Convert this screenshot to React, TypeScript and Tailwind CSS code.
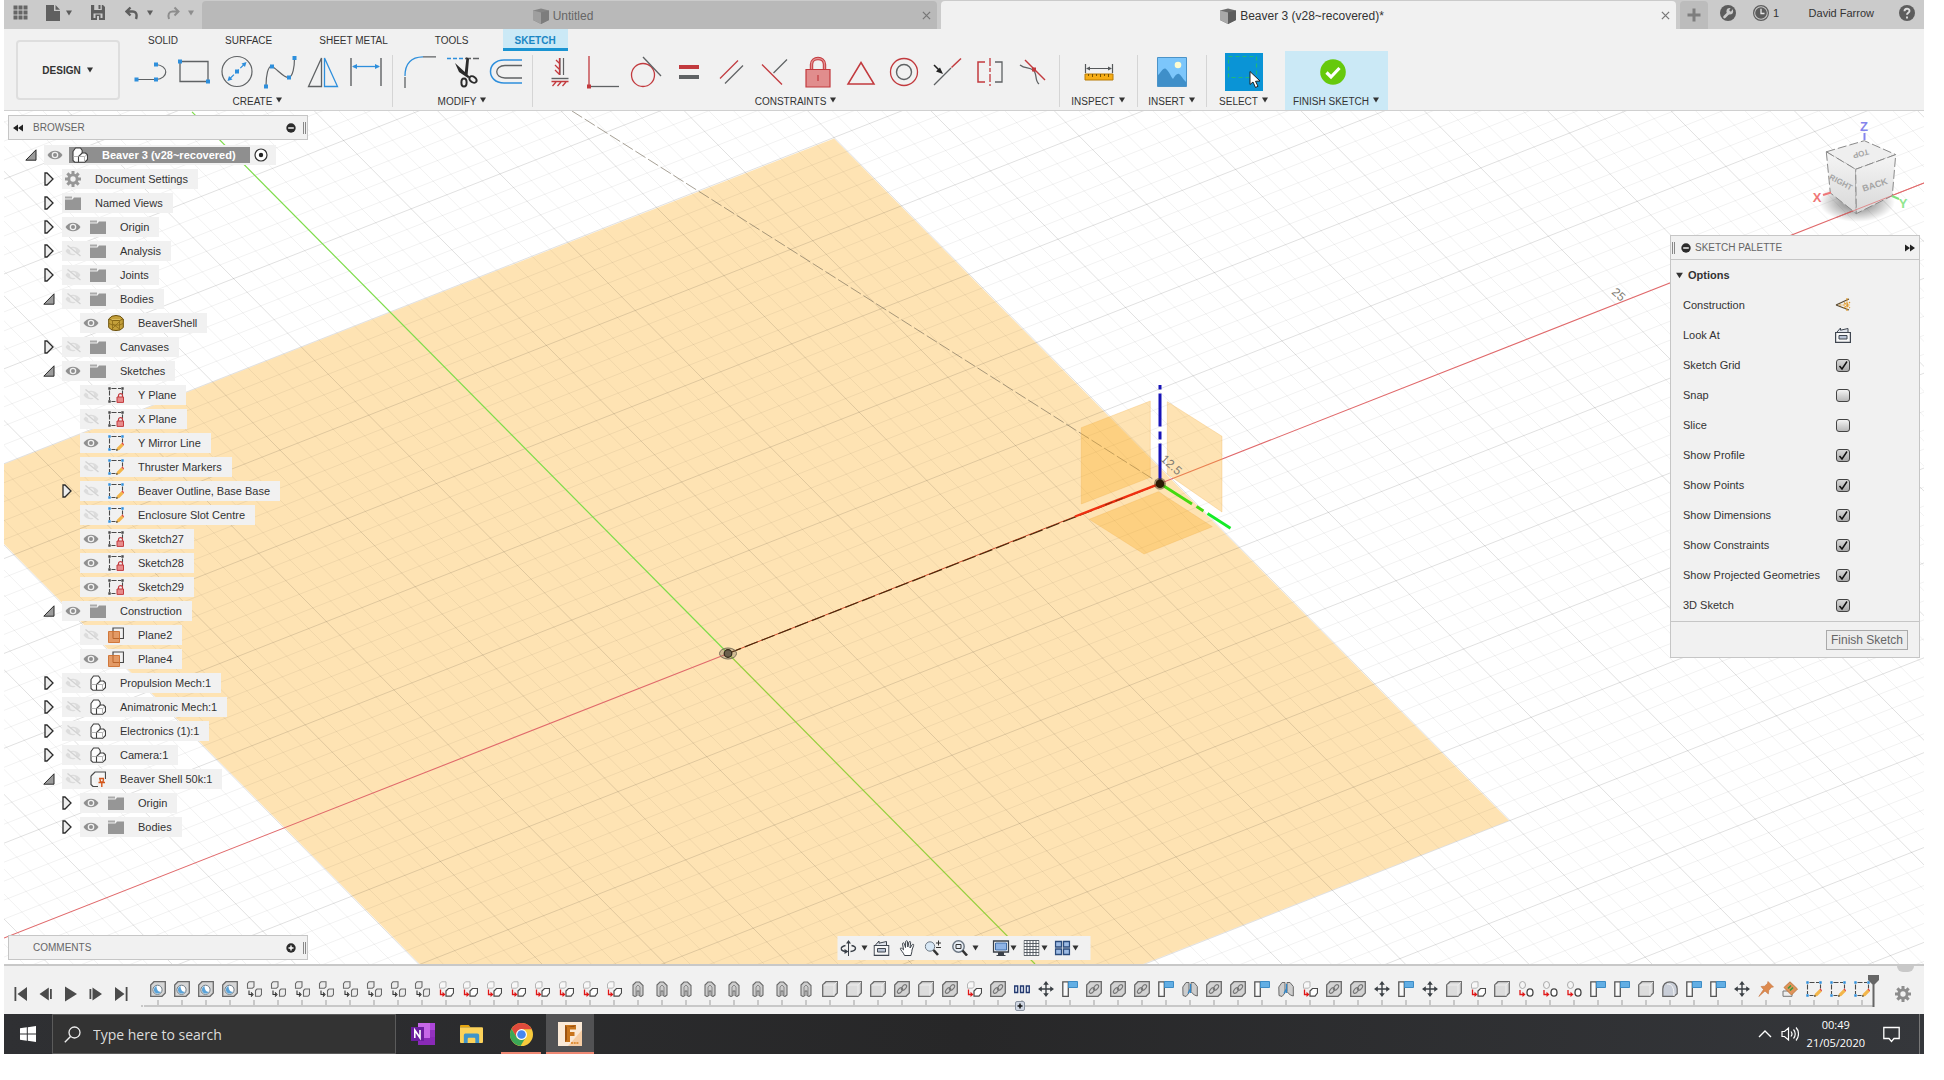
import React from "react";

/* ---------- small shared pieces ---------- */

function Caret({ className = "" }: { className?: string }) {
  return (
    <svg viewBox="0 0 8 6" className={`h-[6px] w-[8px] shrink-0 ${className}`} aria-hidden="true">
      <path d="M1 0.5h6L4 5.5z" fill="currentColor" />
    </svg>
  );
}

function CubeMark({ dark }: { dark?: boolean }) {
  return (
    <svg viewBox="0 0 16 16" className="h-4 w-4 shrink-0" aria-hidden="true">
      <path d="M0 2.5 8 .5l8 2v9.5l-8 4-8-4z" fill={dark ? "#6b6b6b" : "#858585"} />
      <path d="M0 2.5 8 4.5V16l-8-4z" fill={dark ? "#a9a9a9" : "#9f9f9f"} />
      <path d="M8 4.5l8-2v9.5l-8 4z" fill={dark ? "#5d5d5d" : "#7d7d7d"} />
    </svg>
  );
}

function Grip() {
  return (
    <span className="flex h-3 w-[3px] justify-between" aria-hidden="true">
      <span className="w-px bg-[#888]" />
      <span className="w-px bg-[#888]" />
    </span>
  );
}

function RoundSign({ plus }: { plus?: boolean }) {
  return (
    <svg viewBox="0 0 10 10" className="h-[10px] w-[10px]" aria-hidden="true">
      <circle cx="5" cy="5" r="4.7" fill="#2b2b2b" />
      <path d={plus ? "M2.5 5h5M5 2.5v5" : "M2.2 5h5.6"} stroke="#fff" strokeWidth="1.4" />
    </svg>
  );
}

/* ---------- top bar ---------- */

function TopBar() {
  return (
    <header className="flex h-[29px] shrink-0 items-stretch bg-[#cbcbcb] text-[#5c5c5c]">
      <div className="flex w-[198px] shrink-0 items-center pb-1 pl-2">
        <button aria-label="Data panel" className="ml-px">
          <svg viewBox="0 0 15 15" className="h-[15px] w-[15px]">
            {[0, 5, 10].map((y) =>
              [0, 5, 10].map((x) => <rect key={`${x}-${y}`} x={x + 0.5} y={y + 0.5} width="4" height="4" fill="#666" />)
            )}
          </svg>
        </button>
        <button aria-label="File" className="ml-[18px] flex items-center gap-[5px]">
          <svg viewBox="0 0 14 16" className="h-4 w-[14px]">
            <path d="M0 0h8v6h6v10H0z" fill="#606060" />
            <path d="M9.5 0 14 4.7H9.5z" fill="#606060" />
          </svg>
          <Caret />
        </button>
        <button aria-label="Save" className="ml-[18px]">
          <svg viewBox="0 0 14 15" className="h-[15px] w-[14px]">
            <path d="M0 0h12l2 2v13H0z" fill="#5e5e5e" />
            <path d="M3.2 0h7.6v5H3.2zM2.5 8.5h9V13h-9z" fill="#cbcbcb" />
            <path d="M7.5 0h2v4h-2zM4.5 9.5h5V15h-5z" fill="#5e5e5e" />
            <path d="M6 11h2v4H6z" fill="#cbcbcb" />
          </svg>
        </button>
        <button aria-label="Undo" className="ml-5 flex items-center gap-[7px]">
          <svg viewBox="0 0 14 14" className="h-[14px] w-[14px]">
            <path d="M5.5 1.5 1.5 5.5l4 4M2 5.5h5.5c3.5 0 5 3 3.5 7.5" fill="none" stroke="#5e5e5e" strokeWidth="2.4" />
          </svg>
          <Caret />
        </button>
        <button aria-label="Redo" className="ml-3 flex items-center gap-[7px] text-[#8d8d8d]">
          <svg viewBox="0 0 14 14" className="h-[14px] w-[14px]">
            <path d="M8.5 1.5l4 4-4 4M12 5.5H6.5C3 5.5 1.5 8.5 3 13" fill="none" stroke="#8d8d8d" strokeWidth="2" />
          </svg>
          <Caret />
        </button>
      </div>

      <div className="flex min-w-0 flex-1 gap-1 pt-px text-[12px]" role="tablist">
        <div className="flex min-w-0 flex-1 items-center rounded-t bg-[#b9b9b9] pr-[5px]">
          <button role="tab" aria-selected="false" className="flex h-full flex-1 items-center justify-center gap-1 pl-1 pt-px text-[#666]">
            <CubeMark />
            Untitled
          </button>
          <button aria-label="Close Untitled" className="w-3">
            <svg viewBox="0 0 10 10" className="mx-auto h-[9px] w-[9px]">
              <path d="M1 1l8 8M9 1 1 9" stroke="#777" strokeWidth="1.4" />
            </svg>
          </button>
        </div>
        <div className="flex min-w-0 flex-1 items-center rounded-t bg-[#f1f1f1] pr-[5px]">
          <button role="tab" aria-selected="true" className="flex h-full flex-1 items-center justify-center gap-1 pl-1 pt-px text-[#333]">
            <CubeMark dark />
            Beaver 3 (v28~recovered)*
          </button>
          <button aria-label="Close Beaver 3" className="w-3">
            <svg viewBox="0 0 10 10" className="mx-auto h-[9px] w-[9px]">
              <path d="M1 1l8 8M9 1 1 9" stroke="#777" strokeWidth="1.4" />
            </svg>
          </button>
        </div>
      </div>

      <div className="flex w-[248px] shrink-0 pl-1 pt-px">
        <button aria-label="New tab" className="flex w-7 items-center justify-center rounded-t bg-[#bcbcbc]">
          <svg viewBox="0 0 14 14" className="h-[14px] w-[14px]">
            <path d="M7 .5v13M.5 7h13" stroke="#7e7e7e" strokeWidth="3" />
          </svg>
        </button>
        <div className="flex flex-1 items-center pb-1 pl-3 pr-[9px] text-[11px] text-[#333]">
          <button aria-label="Job status">
            <svg viewBox="0 0 16 16" className="h-4 w-4">
              <circle cx="8" cy="8" r="8" fill="#5d5d5d" />
              <path d="M4.500 12 8.500 8" stroke="#cbcbcb" strokeWidth="2.600" strokeLinecap="round" />
              <circle cx="9.800" cy="6.200" r="3.300" fill="#cbcbcb" />
              <path d="M12.500 2.500 10 6" stroke="#5d5d5d" strokeWidth="2.200" />
            </svg>
          </button>
          <button aria-label="Notifications, 1" className="ml-[17px] flex items-center gap-1">
            <svg viewBox="0 0 16 16" className="h-4 w-4">
              <circle cx="8" cy="8" r="7.4" fill="none" stroke="#5d5d5d" strokeWidth="1.2" />
              <circle cx="8" cy="8" r="5.8" fill="#5d5d5d" />
              <path d="M8 3.8v4.700h3.500" stroke="#e8e8e8" strokeWidth="1.3" fill="none" />
            </svg>
            1
          </button>
          <button className="ml-auto">David Farrow</button>
          <button aria-label="Help" className="ml-[25px]">
            <svg viewBox="0 0 16 16" className="h-4 w-4">
              <circle cx="8" cy="8" r="8" fill="#5d5d5d" />
              <path d="M5.5 6.2C5.5 3 10.500 3 10.500 6c0 1.800-2.500 1.800-2.500 3.800M8 11.500v2" stroke="#ddd" strokeWidth="1.9" fill="none" />
            </svg>
          </button>
        </div>
      </div>
    </header>
  );
}

/* ---------- ribbon ---------- */

const GREY = "#5f6264";
const BLUE = "#2e8fdc";
const RED = "#c23a3e";

const ribbonArt: Record<string, React.ReactNode> = {
  line: (
    <>
      <path d="M1 23.5h20M21 8.5c13 1 13 14 0 15" fill="none" stroke={GREY} strokeWidth="1.2" />
      <path d="M-.5 21.5h4v4h-4zM19 21.5h4v4h-4zM19 6.5h4v4h-4z" fill={BLUE} />
    </>
  ),
  rect: (
    <>
      <path d="M2 5.5h28v20H2z" fill="none" stroke={GREY} strokeWidth="1.3" />
      <path d="M0 3.5h4v4H0zM28 23.5h4v4h-4z" fill={BLUE} />
    </>
  ),
  circle: (
    <>
      <circle cx="16" cy="15.5" r="15" fill="none" stroke={GREY} strokeWidth="1.2" />
      <path d="M8 23.5 24 7.5" stroke={BLUE} strokeWidth="1.2" strokeDasharray="7 2 5 2 7" />
      <path d="M14 13.5h4v4h-4zM25.5 6l-1.5 5-3.5-3.5zM6.5 25l1.5-5 3.5 3.5z" fill={BLUE} />
    </>
  ),
  spline: (
    <>
      <path d="M2 30C2 20 4 9 8 10.5S20 22 24.500 21.500 30.500 10 30.500 2" fill="none" stroke={GREY} strokeWidth="1.2" />
      <path d="M0 28.5h4v4H0zM6 8.5h4v4H6zM23 19.5h4v4h-4zM28.500 0h4v4h-4z" fill={BLUE} />
    </>
  ),
  mirror: (
    <>
      <path d="M14.5 2v28.5H1.5z" fill="none" stroke={GREY} strokeWidth="1.3" />
      <path d="M17.5 2v28.5h13z" fill="none" stroke={BLUE} strokeWidth="1.3" />
    </>
  ),
  dimension: (
    <>
      <path d="M1 2v28M31 2v28" stroke={GREY} strokeWidth="1.4" />
      <path d="M3 10.5h26" stroke={BLUE} strokeWidth="1.3" />
      <path d="M2 10.5l5-2.5v5zM30 10.5l-5-2.5v5z" fill={BLUE} />
    </>
  ),
  fillet: (
    <>
      <path d="M1 20C1 7 8 1 19 .8" fill="none" stroke={BLUE} strokeWidth="1.3" />
      <path d="M19 .8h13M1 21v11" stroke={GREY} strokeWidth="1.3" />
    </>
  ),
  trim: (
    <>
      <path d="M0 2.5h17" stroke={BLUE} strokeWidth="1.4" strokeDasharray="4 2" />
      <path d="M18 2.5h14" stroke={GREY} strokeWidth="1.3" strokeDasharray="6 2" />
      <path d="M19.5 1 22 3l-1.500 17-3-1zM8 7l12 11 3 3-2 1-9-6z" fill="#2b2b2b" />
      <ellipse cx="17" cy="26.5" rx="2.6" ry="4" fill="none" stroke="#2b2b2b" strokeWidth="2" />
      <ellipse cx="26" cy="23.5" rx="4" ry="2.8" transform="rotate(35 26 23.5)" fill="none" stroke="#2b2b2b" strokeWidth="2" />
    </>
  ),
  offset: (
    <>
      <path d="M32 4H14C-4 4-4 27 14 27h18" fill="none" stroke={BLUE} strokeWidth="1.5" />
      <path d="M32 9.5H15C4 9.500 4 22 15 22h17" fill="none" stroke={GREY} strokeWidth="1.3" />
    </>
  ),
  horizontal: (
    <>
      <path d="M16 2v17M19.5 2v17" stroke={GREY} strokeWidth="1.2" />
      <path d="M7.5 22.5h17" stroke={GREY} strokeWidth="1.4" />
      <path d="M15.5 2v17M12 4l3.500 3.500M11 9l4.500 4.500M11 14l4.500 4.500M7.500 25.500h17M12 26l-3.500 4M17 26l-3.500 4M22 26l-3.500 4" fill="none" stroke={RED} strokeWidth="1.3" />
    </>
  ),
  coincident: (
    <>
      <path d="M2 30.5h30" stroke={GREY} strokeWidth="1.3" />
      <path d="M2 0v30" stroke={RED} strokeWidth="1.3" />
      <path d="M0 28.5h4v4H0z" fill={RED} />
    </>
  ),
  tangent: (
    <>
      <circle cx="13" cy="19" r="11.5" fill="none" stroke={RED} strokeWidth="1.3" />
      <path d="M13 1 31 20" stroke={GREY} strokeWidth="1.3" />
    </>
  ),
  equal: (
    <>
      <path d="M6 9h20v4H6z" fill={RED} />
      <path d="M6 19h20v4H6z" fill={GREY} />
    </>
  ),
  parallel: (
    <>
      <path d="M4 22.5 22 4.5" stroke={RED} strokeWidth="1.3" />
      <path d="M9 27.5 27 9.5" stroke={GREY} strokeWidth="1.3" />
    </>
  ),
  perpendicular: (
    <>
      <path d="M3 8.5 23 28.5" stroke={RED} strokeWidth="1.3" />
      <path d="M28 3.5 14.500 17" stroke={GREY} strokeWidth="1.3" />
    </>
  ),
  lock: (
    <>
      <path d="M9.5 13V8.5c0-8 13-8 13 0V13" fill="none" stroke={RED} strokeWidth="3.4" />
      <path d="M9.5 13V8.5c0-8 13-8 13 0V13" fill="none" stroke="#e58f8f" strokeWidth="1.4" />
      <path d="M4 13.5h24V31H4z" fill="#e18d8d" stroke={RED} strokeWidth="1.2" />
      <path d="M16 19v6" stroke={RED} strokeWidth="1.2" />
    </>
  ),
  triangle: <path d="M16 6.5 29 28H3z" fill="none" stroke={RED} strokeWidth="1.5" />,
  concentric: (
    <>
      <circle cx="16" cy="16" r="13.5" fill="none" stroke={RED} strokeWidth="1.3" />
      <circle cx="16" cy="16" r="7.5" fill="none" stroke={GREY} strokeWidth="1.4" />
    </>
  ),
  collinear: (
    <>
      <path d="M3 29 20 12" stroke={GREY} strokeWidth="1.3" />
      <path d="M20.5 11.5l9.500-9" stroke={RED} strokeWidth="1.5" />
      <path d="M3 9l6 6" stroke="#222" strokeWidth="1.6" />
      <path d="M12 18l-7-2.500 4-4z" fill="#222" />
    </>
  ),
  symmetry: (
    <>
      <path d="M11 6H4v20h7" fill="none" stroke={RED} strokeWidth="1.5" />
      <path d="M21 6h7v20h-7" fill="none" stroke={GREY} strokeWidth="1.3" />
      <path d="M16 2v28" stroke={RED} strokeWidth="1.3" strokeDasharray="8 2 4 2" />
    </>
  ),
  curvature: (
    <>
      <path d="M3 9c5 4 9 2 13 5 5 4 1 10 6 14" fill="none" stroke={GREY} strokeWidth="1.3" />
      <path d="M8 4 28 24" stroke={RED} strokeWidth="1.4" />
      <path d="M15 11.5h4v4h-4z" fill={RED} />
    </>
  ),
  inspect: (
    <>
      <path d="M2.5 8v9M29.5 8v9M4 12.5h24" stroke="#55585a" strokeWidth="1.2" />
      <path d="M3 12.5l4-2v4zM29 12.5l-4-2v4z" fill="#55585a" />
      <path d="M2 18h28v6H2z" fill="#f6ad16" stroke="#b87a05" />
      <path d="M5.5 18v2M9.5 18v3M13.5 18v2M17.5 18v3M21.5 18v2M25.5 18v3" stroke="#7a5200" />
    </>
  ),
  insert: (
    <>
      <path d="M1.5 1.5h29v29h-29z" fill="#7cc6fb" stroke="#4b93c8" />
      <circle cx="22" cy="9" r="3.3" fill="#fdfcd0" />
      <path d="M2 19c3-2 5-8 8-6s5 8 7 10c2-3 4-6 6-5s4 5 7 8v4H2z" fill="#3f8fc9" />
    </>
  ),
};

function Tool({ name, label }: { name: string; label: string }) {
  return (
    <button aria-label={label} className="flex w-[43px] justify-center">
      <svg viewBox="0 0 32 32" className="h-8 w-8 overflow-visible">
        {ribbonArt[name]}
      </svg>
    </button>
  );
}

function MenuLabel({ children }: { children: string }) {
  return (
    <button className="mt-[7px] flex items-center gap-[3px] leading-[14px]">
      {children}
      <Caret className="-mt-1" />
    </button>
  );
}

function Group({ label, tools }: { label: string; tools: [string, string][] }) {
  return (
    <section className="flex flex-col items-center">
      <div className="flex pt-[27px]">
        {tools.map(([name, text]) => (
          <Tool key={name} name={name} label={text} />
        ))}
      </div>
      <MenuLabel>{label}</MenuLabel>
    </section>
  );
}

function Separator() {
  return <div className="mt-[26px] h-[52px] w-px shrink-0 bg-[#d5d5d5]" />;
}

function Ribbon() {
  const tabs = ["SOLID", "SURFACE", "SHEET METAL", "TOOLS"];
  return (
    <div className="relative flex h-[82px] shrink-0 border-b border-[#d0d0d0] bg-[#f1f1f1] text-[10px] text-[#333]">
      <button className="ml-3 mt-[11px] flex h-[60px] w-[104px] shrink-0 items-center justify-center gap-[5px] rounded border-2 border-[#dedede] bg-[#f2f2f2] font-bold">
        DESIGN
        <Caret />
      </button>
      <nav className="absolute left-[131px] top-0 z-10 flex h-[22px] gap-[21px]">
        {tabs.map((t) => (
          <button key={t} className="px-[13px]">
            {t}
          </button>
        ))}
        <button className="border-b-[3px] border-[#1a94d2] bg-[#cbe9f6] px-3 pt-[3px] font-bold text-[#1a86c4]">SKETCH</button>
      </nav>
      <div className="ml-[9px] flex gap-[5px]">
        <Group
          label="CREATE"
          tools={[
            ["line", "Line"],
            ["rect", "Rectangle"],
            ["circle", "Circle"],
            ["spline", "Spline"],
            ["mirror", "Mirror"],
            ["dimension", "Dimension"],
          ]}
        />
        <Separator />
        <Group
          label="MODIFY"
          tools={[
            ["fillet", "Fillet"],
            ["trim", "Trim"],
            ["offset", "Offset"],
          ]}
        />
        <Separator />
        <Group
          label="CONSTRAINTS"
          tools={[
            ["horizontal", "Horizontal/Vertical"],
            ["coincident", "Coincident"],
            ["tangent", "Tangent"],
            ["equal", "Equal"],
            ["parallel", "Parallel"],
            ["perpendicular", "Perpendicular"],
            ["lock", "Fix"],
            ["triangle", "Midpoint"],
            ["concentric", "Concentric"],
            ["collinear", "Collinear"],
            ["symmetry", "Symmetry"],
            ["curvature", "Curvature"],
          ]}
        />
        <Separator />
      </div>
      <div className="flex w-[77px] justify-center">
        <Group label="INSPECT" tools={[["inspect", "Measure"]]} />
      </div>
      <Separator />
      <div className="flex w-[68px] justify-center">
        <Group label="INSERT" tools={[["insert", "Insert image"]]} />
      </div>
      <Separator />
      <div className="flex w-[78px] flex-col items-center pr-1 pt-6">
        <button aria-label="Select">
          <svg viewBox="0 0 38 38" className="h-[38px] w-[38px] overflow-visible">
            <path d="M0 0h38v38H0z" fill="#0a94d6" />
            <path d="M3.5 3.5h28v21h-28z" fill="none" stroke="#1eb87a" strokeWidth="1.2" strokeDasharray="4 3" />
            <path d="M25 18.5v13l3-2.500 2.500 5.500 2.500-1.200-2.500-5 4.500-.3z" fill="#fff" stroke="#222" />
          </svg>
        </button>
        <div className="-mt-[3px]">
          <MenuLabel>SELECT</MenuLabel>
        </div>
      </div>
      <div className="mt-[22px] flex w-[103px] flex-col items-center bg-[#cbe9f6] pt-2">
        <button aria-label="Finish sketch" className="mr-[7px]">
          <svg viewBox="0 0 26 26" className="h-[26px] w-[26px]">
            <circle cx="13" cy="13" r="12.8" fill="#66c90c" />
            <path d="M6.5 13.5l4.500 4.500 8.500-9" fill="none" stroke="#fff" strokeWidth="3.2" />
          </svg>
        </button>
        <div className="mt-[3px]">
          <MenuLabel>FINISH SKETCH</MenuLabel>
        </div>
      </div>
    </div>
  );
}

/* ---------- model canvas ---------- */

const CX = 728;
const CY = 653.5;
const UX = 88.8;
const UY = -34.9;
const VX = 67.6;
const VY = 68.3;

function gridPath(major: boolean) {
  let d = "";
  for (let i = -110; i <= 110; i++) {
    if ((i % 5 === 0) !== major || i === 0) continue;
    const s = i / 5;
    d += `M${CX + s * UX - 24 * VX} ${CY + s * UY - 24 * VY}L${CX + s * UX + 24 * VX} ${CY + s * UY + 24 * VY}`;
    d += `M${CX + s * VX - 24 * UX} ${CY + s * VY - 24 * UY}L${CX + s * VX + 24 * UX} ${CY + s * VY + 24 * UY}`;
  }
  return d;
}

function ModelCanvas() {
  const plane = "#fdac20";
  return (
    <svg viewBox="4 111 1920 853" preserveAspectRatio="xMidYMid slice" className="absolute inset-0 h-full w-full" aria-hidden="true">
      <defs>
        <radialGradient id="cubeShadow">
          <stop offset="0.4" stopColor="#000" stopOpacity="0.35" />
          <stop offset="1" stopColor="#000" stopOpacity="0" />
        </radialGradient>
        <linearGradient id="cubeFace" x1="0" y1="0" x2="0" y2="1">
          <stop offset="0" stopColor="#f5f5f5" />
          <stop offset="1" stopColor="#d8d8d8" />
        </linearGradient>
      </defs>
      <path d="M4 111h1920v853H4z" fill="#fff" />
      <path d="M834 138.500 1509 820.500 622 1168.500-53 486.500z" fill={plane} fillOpacity="0.34" />
      <path d={gridPath(false)} stroke="#000" strokeOpacity="0.055" fill="none" />
      <path d={gridPath(true)} stroke="#000" strokeOpacity="0.12" fill="none" />
      <path d="M4 938 728 653.500M1160 483.500 1924 183" stroke="#e0696b" strokeWidth="1.1" fill="none" />
      <path d="M192 111.900 728 653.500" stroke="#7ddc4a" strokeWidth="1.2" />
      <path d="M728 653.500 1035 964" stroke="#95cf3c" strokeWidth="1.2" />
      <path d="M572 111 1160 483.500" stroke="#6d6350" strokeOpacity="0.6" strokeDasharray="12 3" />

      <g fill={plane} fillOpacity="0.34" stroke="#f0b050" strokeOpacity="0.3">
        <path d="M1081.300 427.700 1150.300 401v76.300L1081.300 504z" />
        <path d="M1167.300 401.700 1222 436.300V512L1167.300 474z" />
        <path d="M1089.300 519.300 1158.300 491.700 1212.300 526.700 1144 554z" />
      </g>
      <path d="M728 653.500 1075 516.500" stroke="#d64b2a" />
      <path d="M728 653.500 1160 483.700" stroke="#4a2a0c" strokeWidth="1.2" strokeDasharray="14 4" />
      <path d="M1075 516.500 1160 483.700" stroke="#ef2f10" strokeWidth="2.4" />
      <path d="M1105 505l20-7.600" stroke="#8c2a0a" strokeDasharray="8 3" />
      <path d="M1160 385v4.500M1160 393.500v33M1160 431.500v8M1160 443.500v40" stroke="#1712b8" strokeWidth="3" />
      <path d="M1163 485.500 1192 504M1196.500 506.500l7 4.500" stroke="#44d90f" strokeWidth="2.8" />
      <path d="M1207.500 513.500 1230.500 528.300" stroke="#14ec28" strokeWidth="2.8" />
      <circle cx="1160" cy="483.700" r="6" fill="#4b3b20" fillOpacity="0.5" />
      <circle cx="1160" cy="483.700" r="4.3" fill="#2a1a05" />
      <ellipse cx="728" cy="653.500" rx="8.5" ry="5.5" fill="#6b6048" fillOpacity="0.3" stroke="#7a705a" />
      <circle cx="728" cy="653.500" r="3.8" fill="#6b604c" stroke="#33291a" strokeWidth="1.2" />

      <g fontFamily="'Liberation Sans', Arial, sans-serif" fontSize="12" fill="#7d7970">
        <text x="1160" y="460" transform="rotate(42 1160 460)">12.5</text>
        <text x="1611" y="293" transform="rotate(42 1611 293)">25</text>
      </g>

      <ellipse cx="1857" cy="202" rx="38" ry="20" fill="url(#cubeShadow)" />
      <g stroke="#8a8a8a" strokeDasharray="9 3">
        <path d="M1826.300 151.800 1864.300 140.700 1895.700 154.600 1855.700 169.300z" fill="#efefef" />
        <path d="M1826.300 151.800 1855.700 169.300 1856.300 213.600 1830.300 192.900z" fill="url(#cubeFace)" />
        <path d="M1895.700 154.600 1855.700 169.300 1856.300 213.600 1892.300 195.700z" fill="url(#cubeFace)" />
      </g>
      <path d="M1836 217.600 1924 183" stroke="#e0696b" strokeOpacity="0.7" />
      <path d="M1864.500 133v7" stroke="#8484ec" strokeWidth="2" />
      <path d="M1823 195l8-2.500" stroke="#ef7777" strokeWidth="2" />
      <path d="M1892 196l7 3" stroke="#7fe37f" strokeWidth="2" />
      <g fontFamily="'Liberation Sans', Arial, sans-serif" textAnchor="middle">
        <g fontWeight="bold" fill="#a4a4a4">
          <text x="1841" y="185" transform="rotate(28 1841 182)" fontSize="8">RIGHT</text>
          <text x="1875" y="188" transform="rotate(-18 1875 185)" fontSize="9">BACK</text>
          <text x="1861" y="157" transform="rotate(165 1861 154)" fontSize="8">TOP</text>
        </g>
        <text x="1864" y="131" fontSize="13" fontWeight="bold" fill="#8484ec">Z</text>
        <text x="1817" y="202" fontSize="13" fontWeight="bold" fill="#ef7777">X</text>
        <text x="1903" y="208" fontSize="13" fontWeight="bold" fill="#8fe68f">Y</text>
      </g>
    </svg>
  );
}

/* ---------- browser tree ---------- */

type Kind = "folder" | "gear" | "body" | "locked" | "pencil" | "plane" | "component" | "pinned";
type Row = { label: string; level: 1 | 2; kind: Kind; open?: boolean; closed?: boolean; eye?: "on" | "off" };

const rows: Row[] = [
  { label: "Document Settings", level: 1, kind: "gear", closed: true },
  { label: "Named Views", level: 1, kind: "folder", closed: true },
  { label: "Origin", level: 1, kind: "folder", closed: true, eye: "on" },
  { label: "Analysis", level: 1, kind: "folder", closed: true, eye: "off" },
  { label: "Joints", level: 1, kind: "folder", closed: true, eye: "off" },
  { label: "Bodies", level: 1, kind: "folder", open: true, eye: "off" },
  { label: "BeaverShell", level: 2, kind: "body", eye: "on" },
  { label: "Canvases", level: 1, kind: "folder", closed: true, eye: "off" },
  { label: "Sketches", level: 1, kind: "folder", open: true, eye: "on" },
  { label: "Y Plane", level: 2, kind: "locked", eye: "off" },
  { label: "X Plane", level: 2, kind: "locked", eye: "off" },
  { label: "Y Mirror Line", level: 2, kind: "pencil", eye: "on" },
  { label: "Thruster Markers", level: 2, kind: "pencil", eye: "off" },
  { label: "Beaver Outline, Base Base", level: 2, kind: "pencil", closed: true, eye: "off" },
  { label: "Enclosure Slot Centre", level: 2, kind: "pencil", eye: "off" },
  { label: "Sketch27", level: 2, kind: "locked", eye: "on" },
  { label: "Sketch28", level: 2, kind: "locked", eye: "on" },
  { label: "Sketch29", level: 2, kind: "locked", eye: "on" },
  { label: "Construction", level: 1, kind: "folder", open: true, eye: "on" },
  { label: "Plane2", level: 2, kind: "plane", eye: "off" },
  { label: "Plane4", level: 2, kind: "plane", eye: "on" },
  { label: "Propulsion Mech:1", level: 1, kind: "component", closed: true, eye: "off" },
  { label: "Animatronic Mech:1", level: 1, kind: "component", closed: true, eye: "off" },
  { label: "Electronics (1):1", level: 1, kind: "component", closed: true, eye: "off" },
  { label: "Camera:1", level: 1, kind: "component", closed: true, eye: "off" },
  { label: "Beaver Shell 50k:1", level: 1, kind: "pinned", open: true, eye: "off" },
  { label: "Origin", level: 2, kind: "folder", closed: true, eye: "on" },
  { label: "Bodies", level: 2, kind: "folder", closed: true, eye: "on" },
];

function GearShape({ fill, hole }: { fill: string; hole: string }) {
  return (
    <>
      <g fill={fill}>
        {[0, 45, 90, 135].map((a) => (
          <rect key={a} x="6.5" y="0" width="3" height="16" transform={`rotate(${a} 8 8)`} />
        ))}
        <circle cx="8" cy="8" r="5.6" />
      </g>
      <circle cx="8" cy="8" r="2.7" fill={hole} />
    </>
  );
}

function SketchFrame({ blue }: { blue?: boolean }) {
  const dot = blue ? BLUE : "#4a4a4a";
  return (
    <>
      <path d="M1.5 3.500v9.500M3.500 1.500h9.500M14.500 3.500v4M3.500 14.500h4" stroke="#4a4a4a" strokeWidth="1.1" strokeDasharray="5 1.5" />
      <path d="M.3 .3h2.400v2.400H.3zM13.300 .3h2.400v2.400h-2.400zM.3 13.300h2.400v2.400H.3z" fill={dot} />
    </>
  );
}

const treeArt: Record<Kind, React.ReactNode> = {
  folder: (
    <>
      <path d="M0 1.5h7v2H0z" fill="#aaa" />
      <path d="M0 4.5h7.500L9 2.500h7V15H0z" fill="#969696" />
    </>
  ),
  gear: <GearShape fill="#979797" hole="#f1f1f1" />,
  body: (
    <>
      <path d="M.7 4 4 1.200 8 .5l4 .7L15.300 4v8.500L12 15l-4 .5-4-.5-3.300-2.500z" fill="#c4a03a" stroke="#6b4f08" />
      <path d="M1 4l3.500 1.500h7L15 4" fill="#d9bb5c" stroke="#7d5e10" strokeWidth=".9" />
      <path d="M4.5 5.500V15M11.500 5.500V15M1 8.500l3.500 1.500h7L15 8.500M4.500 13.500l7-7M5 9l6.500 5" fill="none" stroke="#8a6a18" strokeWidth=".8" />
    </>
  ),
  locked: (
    <>
      <SketchFrame />
      <path d="M10.5 10V8.500c0-2.500 4-2.500 4 0V10" fill="none" stroke={RED} strokeWidth="1.2" />
      <path d="M9 10h6.500v5.400H9z" fill="#e88b8b" stroke={RED} />
    </>
  ),
  pencil: (
    <>
      <SketchFrame blue />
      <path d="M8 15.800 9 12.800l4.500-4.500 2.300 2.300-4.500 4.500z" fill="#f3b64a" />
      <path d="M13.500 8.300l1-1 1.500 2.300-.6 1z" fill="#e0453f" />
      <path d="M8 15.800l.7-2 1.400 1.400z" fill="#333" />
    </>
  ),
  plane: (
    <>
      <path d="M5 4V1h10.500v10.500H12" fill="none" stroke="#4a4a4a" strokeWidth="1.2" />
      <path d="M.5 4.500h11v11H.5z" fill="#e39a66" stroke="#d1783b" />
      <path d="M5 4.500v7h6.500" fill="none" stroke="#b8642c" />
    </>
  ),
  component: (
    <>
      <path
        d="M1 4.500 3.500 1h5L10.200 3.500V6h3.300L15.500 8v4.500l-3 2.800H3L1 13.500z"
        fill="#fdfdfd"
        stroke="#3f3f3f"
        strokeWidth="1.1"
        strokeLinejoin="round"
      />
      <path d="M6.500 15V9.500l3.700-3.500" fill="none" stroke="#3f3f3f" strokeWidth="1.1" />
      <path d="M1.500 9.500h5M7 9.500h5.500V15M12.500 9.500 15 8" fill="none" stroke="#b5b5b5" />
    </>
  ),
  pinned: (
    <>
      <path d="M1 5 5 1h10.500v7M1 5v8.500l2 2h5" fill="#f6f6f6" stroke="#4a4a4a" strokeWidth="1.2" />
      <path d="M9 7.500h5M10 8l.5 3h2.500l.5-3M8.500 11.500h6.500M11.800 12v4" stroke="#d4571b" strokeWidth="1.400" fill="none" />
    </>
  ),
};

function Eye({ on }: { on: boolean }) {
  return on ? (
    <svg viewBox="0 0 16 12" className="h-3 w-4" aria-hidden="true">
      <path d="M.5 6C4 .2 12 .2 15.500 6 12 11.800 4 11.800.5 6z" fill="#8f8f8f" />
      <circle cx="8" cy="6" r="3.3" fill="#f1f1f1" />
      <circle cx="8" cy="6" r="2" fill="#8f8f8f" />
    </svg>
  ) : (
    <svg viewBox="0 0 16 12" className="h-3 w-4" aria-hidden="true">
      <path d="M.5 6C4 .2 12 .2 15.500 6 12 11.800 4 11.800.5 6z" fill="#dcdcdc" />
      <circle cx="8" cy="6" r="3" fill="#efefef" />
      <path d="M1 .5l13.500 11" stroke="#f1f1f1" strokeWidth="2.4" />
      <path d="M2.5 .5l13 10.500" stroke="#d2d2d2" strokeWidth="1.3" />
    </svg>
  );
}

function Twisty({ open }: { open: boolean }) {
  return open ? (
    <svg viewBox="0 0 12 12" className="h-3 w-3" aria-hidden="true">
      <path d="M11 .8v10.400H.8z" fill="#9b9b9b" stroke="#2a2a2a" />
    </svg>
  ) : (
    <svg viewBox="0 0 10 14" className="ml-px h-[14px] w-[10px]" aria-hidden="true">
      <path d="M1 1h2l6 6-6 6H1z" fill="#ededed" stroke="#2a2a2a" strokeWidth="1.3" />
    </svg>
  );
}

function PanelHeader({ title, plus }: { title: string; plus?: boolean }) {
  return (
    <div className="flex h-[25px] items-center border border-[#c6c6c6] bg-[#f1f1f1] pr-px text-[10px] text-[#666]">
      <span className="w-6 pl-1">
        {!plus && (
          <svg viewBox="0 0 10 8" className="h-2 w-[10px]" aria-hidden="true">
            <path d="M5 .5v7L0 4zM10 .5v7L5 4z" fill="#222" />
          </svg>
        )}
      </span>
      <h2>{title}</h2>
      <button aria-label={plus ? "Expand" : "Minimise"} className="ml-auto mr-[7px]">
        <RoundSign plus={plus} />
      </button>
      <Grip />
    </div>
  );
}

function Browser() {
  return (
    <>
      <PanelHeader title="BROWSER" />
      <ul className="pt-[3px] text-[11px] text-[#333]">
        <li className="flex h-6 items-center pl-[17px]">
          <button aria-label="Collapse Beaver 3" className="w-[19px]">
            <Twisty open />
          </button>
          <div className="flex h-5 items-center bg-[#f1f1f1] pl-[3px] pr-2">
            <Eye on />
            <span className="ml-[6px] flex h-4 items-center bg-[#8f8f8f] pl-[3px] pr-[14px] font-bold text-white">
              <svg viewBox="0 0 16 16" className="mr-[14px] h-4 w-4" aria-hidden="true">
                {treeArt.component}
              </svg>
              Beaver 3 (v28~recovered)
            </span>
            <svg viewBox="0 0 14 14" className="ml-1 h-[14px] w-[14px]" aria-hidden="true">
              <circle cx="7" cy="7" r="6" fill="#fff" stroke="#333" strokeWidth="1.2" />
              <circle cx="7" cy="7" r="2.2" fill="#222" />
            </svg>
          </div>
        </li>
        {rows.map((r, i) => (
          <li key={i} className={`flex h-6 items-center ${r.level === 1 ? "pl-[35px]" : "pl-[53px]"}`}>
            <span className="flex w-[19px] justify-start">
              {(r.open || r.closed) && (
                <button aria-label={`Toggle ${r.label}`}>
                  <Twisty open={!!r.open} />
                </button>
              )}
            </span>
            <div className="flex h-5 items-center whitespace-nowrap bg-[#f1f1f1] pl-[3px] pr-[10px]">
              {r.eye && (
                <span className="mr-[9px]">
                  <Eye on={r.eye === "on"} />
                </span>
              )}
              <svg viewBox="0 0 16 16" className="mr-[14px] h-4 w-4" aria-hidden="true">
                {treeArt[r.kind]}
              </svg>
              {r.label}
            </div>
          </li>
        ))}
      </ul>
    </>
  );
}

/* ---------- sketch palette ---------- */

const options: [string, boolean][] = [
  ["Sketch Grid", true],
  ["Snap", false],
  ["Slice", false],
  ["Show Profile", true],
  ["Show Points", true],
  ["Show Dimensions", true],
  ["Show Constraints", true],
  ["Show Projected Geometries", true],
  ["3D Sketch", true],
];

function LookAtIcon() {
  return (
    <svg viewBox="0 0 16 16" className="h-4 w-4" aria-hidden="true">
      <path d="M.6 5.500h14.800v9.900H.6z" fill="#f7f7f7" stroke="#3f4650" strokeWidth="1.2" />
      <path d="M4 8.500h8v3.500H4z" fill="#b9c3d4" stroke="#3f4650" />
      <path d="M2 5l3.500-4v2.200L13 1.500V5" fill="#dfe3ea" stroke="#3f4650" />
    </svg>
  );
}

function Palette() {
  return (
    <section className="border border-[#c6c6c6] bg-[#f1f1f1] text-[11px] text-[#333]">
      <header className="flex h-6 items-center border-b border-[#c6c6c6] pl-px pr-1 text-[10px] text-[#666]">
        <Grip />
        <button aria-label="Minimise palette" className="ml-[6px] mr-1">
          <RoundSign />
        </button>
        <h2>SKETCH PALETTE</h2>
        <svg viewBox="0 0 10 8" className="ml-auto h-2 w-[10px]" aria-hidden="true">
          <path d="M0 .5v7L5 4zM5 .5v7L10 4z" fill="#222" />
        </svg>
      </header>
      <div className="pb-px">
        <h3 className="flex h-[30px] items-center gap-1 pl-1 font-bold">
          <Caret className="h-[7px] w-[9px]" />
          Options
        </h3>
        <div className="flex h-[30px] items-center pl-3">
          <span className="w-[152px]">Construction</span>
          <button aria-label="Construction">
            <svg viewBox="0 0 16 16" className="h-4 w-4">
              <path d="M1 8l13-6M1 8l13 5" stroke="#5a4a30" strokeWidth="1.2" />
              <path d="M4 8h11M12 1v14M9 5.500l6 5.500M9 11l6-6" stroke="#e09a2c" strokeWidth="1.2" strokeDasharray="2.5 1" />
            </svg>
          </button>
        </div>
        <div className="flex h-[30px] items-center pl-3">
          <span className="w-[152px]">Look At</span>
          <button aria-label="Look At">
            <LookAtIcon />
          </button>
        </div>
        {options.map(([label, on]) => {
          const id = label.toLowerCase().replace(/ /g, "-");
          return (
            <div key={id} className="flex h-[30px] items-center pl-3">
              <label htmlFor={id} className="w-[153px] whitespace-nowrap">
                {label}
              </label>
              <span className="relative flex">
                <input
                  id={id}
                  type="checkbox"
                  defaultChecked={on}
                  className="peer h-[13px] w-[14px] appearance-none rounded-[3px] border border-[#444] bg-linear-to-b from-[#f4f4f4] to-[#b9b9b9] checked:from-[#d8d8d8] checked:to-[#a9a9a9]"
                />
                <svg viewBox="0 0 14 13" className="pointer-events-none absolute inset-0 hidden h-[13px] w-[14px] peer-checked:block" aria-hidden="true">
                  <path d="M3.5 7 6 10l5-7.500" fill="none" stroke="#111" strokeWidth="1.5" />
                </svg>
              </span>
            </div>
          );
        })}
      </div>
      <footer className="flex h-9 items-center justify-end border-t border-[#c6c6c6] pr-[11px]">
        <button className="h-5 border border-[#aaa] bg-[#ececec] px-1 text-[12px] leading-[18px] text-[#666]">Finish Sketch</button>
      </footer>
    </section>
  );
}

/* ---------- view toolbar ---------- */

function ViewToolbar() {
  const ink = "#3a4048";
  return (
    <div className="absolute bottom-1 left-1/2 flex h-6 -translate-x-1/2 items-center bg-[#f1f1f1] pl-[3px] pr-[11px] text-[#333]">
      <button aria-label="Orbit" className="flex items-center gap-1">
        <svg viewBox="0 0 16 16" className="h-4 w-4">
          <path d="M8 0l2.500 3.500h-2V16h-1V3.500h-2z" fill={ink} />
          <path d="M5 5.500C-1 7-1 11 6 11.500M11 5.500c6 1 5 5.500-1 6" fill="none" stroke={ink} strokeWidth="1.5" />
          <path d="M4 9l4 2.500L4 14z" fill={ink} />
        </svg>
        <Caret />
      </button>
      <button aria-label="Look at" className="ml-[5px]">
        <LookAtIcon />
      </button>
      <button aria-label="Pan" className="ml-[10px]">
        <svg viewBox="0 0 16 16" className="h-4 w-4">
          <path
            d="M5 15.500C4 12.500 1 10 .7 8.500c.8-1 2 0 3.300 1.300L3 3.500C3.500 2.300 4.500 2.800 5 4l1 3.500L6.200 1.500c.5-1 1.600-1 1.800 0l.3 5.500 1.200-5c.6-1 1.700-.6 1.600.4L10.500 8l2.300-3.500c.8-.7 1.800 0 1.300 1L12.500 10c0 2.500-.8 3.500-1 5.500z"
            fill="#fff"
            stroke={ink}
          />
        </svg>
      </button>
      <button aria-label="Zoom" className="ml-[9px]">
        <svg viewBox="0 0 17 16" className="h-4 w-[17px]">
          <circle cx="5.5" cy="6.5" r="4.7" fill="#d7e7f5" stroke="#6d7884" />
          <path d="M9 10l4.500 5" stroke="#333" strokeWidth="2.6" />
          <path d="M11.5 3h5M14 .5v5M11.500 7.500h5" stroke="#333" />
        </svg>
      </button>
      <button aria-label="Zoom window" className="ml-[10px] flex items-center gap-[3px]">
        <svg viewBox="0 0 17 16" className="h-4 w-[17px]">
          <circle cx="7" cy="6.5" r="5.7" fill="#e8eef5" stroke="#6d7884" strokeWidth="1.5" />
          <path d="M4.5 4.500h5v4h-5z" fill="none" stroke="#333" />
          <path d="M11 10.500l4.500 5" stroke="#333" strokeWidth="2.6" />
        </svg>
        <Caret />
      </button>
      <button aria-label="Display settings" className="ml-[13px] flex items-center">
        <svg viewBox="0 0 17 16" className="h-4 w-[17px]">
          <path d="M1 1h15v11H1z" fill="#fff" stroke={ink} strokeWidth="1.4" />
          <path d="M3 3h11v7H3z" fill="#8fb4e6" stroke="#3f6ca8" />
          <path d="M6 12.500h5V15H6zM4 15.500h9" fill={ink} stroke={ink} />
        </svg>
        <Caret />
      </button>
      <button aria-label="Grid settings" className="ml-[6px] flex items-center gap-px">
        <svg viewBox="0 0 16 16" className="h-4 w-4">
          <path d="M.5 .5h15v15H.5zM.5 3.500h15M.5 6.500h15M.5 9.500h15M.5 12.500h15M3.500 .5v15M6.500 .5v15M9.500 .5v15M12.500 .5v15" fill="#fff" stroke="#4d535b" strokeWidth=".9" />
        </svg>
        <Caret />
      </button>
      <button aria-label="Viewports" className="ml-[6px] flex items-center gap-px">
        <svg viewBox="0 0 16 16" className="h-4 w-4">
          <path d="M1 1.500h6v5.500H1zM9 1.500h6v5.500H9zM1 9h6v5.500H1zM9 9h6v5.500H9z" fill="#9dbbe4" stroke="#2c4c7c" strokeWidth="1.3" />
        </svg>
        <Caret />
      </button>
    </div>
  );
}

/* ---------- timeline ---------- */

type Feature = "hole" | "copy" | "paste" | "loft" | "box" | "link" | "pattern" | "move" | "flag" | "split" | "pasteSmall" | "dome" | "pin" | "tag" | "sketch";

const runs: [Feature, number][] = [
  ["hole", 4], ["copy", 8], ["paste", 8], ["loft", 8], ["box", 3], ["link", 1], ["box", 1], ["link", 1],
  ["paste", 1], ["link", 1], ["pattern", 1], ["move", 1], ["flag", 1], ["link", 3], ["flag", 1], ["split", 1],
  ["link", 2], ["flag", 1], ["split", 1], ["paste", 1], ["link", 2], ["move", 1], ["flag", 1], ["move", 1],
  ["box", 1], ["paste", 1], ["box", 1], ["pasteSmall", 3], ["flag", 2], ["box", 1], ["dome", 1], ["flag", 2],
  ["move", 1], ["pin", 1], ["tag", 1], ["sketch", 3],
];
const features: Feature[] = runs.flatMap(([f, n]) => Array<Feature>(n).fill(f));

const boxPath = "M.7 4 4 .7h11.300V12L12 15.300H.7z";
const featureArt: Record<Feature, React.ReactNode> = {
  hole: (
    <>
      <path d={boxPath} fill="#d6d6d6" stroke="#6a6a6a" strokeWidth="1.3" />
      <circle cx="7.5" cy="8.800" r="4.6" fill="#fff" stroke="#6d7a84" />
      <path d="M6.500 4.900C3.500 6 3 10.500 6 12.300c2 .8 4 0 5-1.500-3 0-4.500-2.500-4.500-5.900z" fill="#5aa3d8" />
    </>
  ),
  copy: (
    <>
      <path d="M1.5 2.500 3 .8h5v5L6.500 7.200h-5zM9.500 9.500 11 8h4.500v5.500L14 15.200H9.500z" fill="#ececec" stroke="#6a6a6a" strokeWidth="1.1" />
      <path d="M3 9.500v4h3M5 11.500l2 2-2 2" fill="none" stroke="#333" strokeWidth="1.1" />
    </>
  ),
  paste: (
    <>
      <path d="M1.5 3l2-2.200H8V5.500L6.500 7.200h-5z" fill="#f8f8f8" stroke="#b5b5b5" />
      <path d="M8 10l2.500-2.500h5V12L13 15.200H8z" fill="#fff" stroke="#4a4a4a" strokeWidth="1.2" />
      <path d="M2.5 8.500v5h3" fill="none" stroke="#e01818" strokeWidth="1.3" />
      <path d="M4.500 10.700l3 2.800-3 2.500z" fill="#e01818" />
    </>
  ),
  loft: (
    <>
      <path d="M3 4 6 1h3.500L13 4.500V14l-2 1.500-2-1V10H7v4.500L5 15.500 3 14.500z" fill="#cdcdcd" stroke="#6a6a6a" strokeWidth="1.1" />
      <path d="M6 14V6l2-2 2 2v8" fill="none" stroke="#8a8a8a" />
    </>
  ),
  box: (
    <>
      <path d={boxPath} fill="#dcdcdc" stroke="#6a6a6a" strokeWidth="1.3" />
      <path d="M12 15V4l3-3M12 4H1.500" fill="none" stroke="#f1f1f1" strokeWidth=".8" />
    </>
  ),
  link: (
    <>
      <path d={boxPath} fill="#d3d3d3" stroke="#6a6a6a" strokeWidth="1.3" />
      <ellipse cx="6" cy="9.500" rx="3.3" ry="1.900" transform="rotate(-50 6 9.500)" fill="none" stroke="#777" strokeWidth="1.1" />
      <ellipse cx="10" cy="6.500" rx="3.300" ry="1.900" transform="rotate(-50 10 6.500)" fill="none" stroke="#777" strokeWidth="1.1" />
    </>
  ),
  pattern: <path d="M.7 5h3v6.500h-3zM6.500 5h3v6.500h-3zM12.300 5h3v6.500h-3z" fill="#dfe7f5" stroke="#22386e" strokeWidth="1.3" />,
  move: (
    <>
      <path d="M8 2v12M2 8h12" stroke="#3a3f44" strokeWidth="1.4" />
      <path d="M8 0l2.800 3.800H5.200zM8 16l2.800-3.800H5.200zM0 8l3.800-2.800v5.600zM16 8l-3.800-2.800v5.600z" fill="#3a3f44" />
    </>
  ),
  flag: (
    <>
      <path d="M.8 .8h5.500v14.500H.8z" fill="#fafafa" stroke="#555" strokeWidth="1.3" />
      <path d="M6.500 .5h9v6h-9z" fill="#62aee4" stroke="#3d8cc5" />
    </>
  ),
  split: (
    <>
      <path d="M.8 6 4 1.500h3V12l-3 3.500-3-1zM9 1.500h3l3.300 4V15l-3-1L9 10.700z" fill="#cdcdcd" stroke="#6a6a6a" />
      <path d="M8.500 3v9M6 12.500l2.500-5" stroke="#3287c8" strokeWidth="1.3" />
    </>
  ),
  pasteSmall: (
    <>
      <ellipse cx="4.5" cy="4" rx="3" ry="3.5" fill="#f5f5f5" stroke="#aaa" />
      <ellipse cx="12" cy="11.500" rx="3" ry="3.700" fill="#fff" stroke="#444" strokeWidth="1.3" />
      <path d="M2 9v4.500h3" fill="none" stroke="#e01818" strokeWidth="1.3" />
      <path d="M4.500 10.700l3 2.800-3 2.500z" fill="#e01818" />
    </>
  ),
  dome: (
    <>
      <path d="M.8 8C1 3 4 .8 8 .8s7 3 7.200 7v5L12 15.300H.8z" fill="#c9ced8" stroke="#666" strokeWidth="1.2" />
      <path d="M5 3c5 0 7 3 7 12" fill="none" stroke="#f5f5f5" />
    </>
  ),
  pin: (
    <path d="M10 .5 15.500 6l-2 .3-2.700 3-.5 3.700L7 10 .8 15.500 5.500 8.500 3 5.500l3.500-.3L9.500 2.500z" fill="#dd8a4e" stroke="#c57440" strokeWidth=".6" />
  ),
  tag: (
    <>
      <path d="M1 10v5.300h9V10z" fill="#eee" stroke="#777" />
      <path d="M8 .8 15.500 8l-6 6L2 6.500z" fill="#e0935a" stroke="#c27a40" />
      <path d="M6 7.500l3-3M8 9.500l3-3" stroke="#3a9a3a" strokeWidth="1.6" />
    </>
  ),
  sketch: treeArt.pencil,
};

const transport: [string, string][] = [
  ["Go to start", "M.5 1v14h1.800V1zM13 1v14L3.500 8z"],
  ["Step back", "M11 3v10h1.800V3zM9.800 1.500v13L.5 8z"],
  ["Play", "M1 .5v15L13 8z"],
  ["Step forward", "M.5 3v10h1.800V3zM3.500 1.500v13L13 8z"],
  ["Go to end", "M11.700 1v14h1.800V1zM1 1v14l9.500-7z"],
];

function Timeline() {
  return (
    <div className="relative flex h-[50px] shrink-0 border-t-2 border-[#c8c8c8] bg-[#f1f1f1]">
      <div className="flex w-[137px] shrink-0 items-center gap-[11px] pl-[10px] pt-2">
        {transport.map(([name, d]) => (
          <button key={name} aria-label={name}>
            <svg viewBox="0 0 14 16" className="h-4 w-[14px]">
              <path d={d} fill="#4b4b4b" />
            </svg>
          </button>
        ))}
      </div>
      <div className="flex h-[41px] w-[5px] shrink-0 items-end justify-between" aria-hidden="true">
        <span className="h-[2px] w-[2px] bg-[#c8c8c8]" />
        <span className="h-[2px] w-[2px] bg-[#c8c8c8]" />
      </div>
      <ol className="relative flex h-[41px] border-b-2 border-[#c8c8c8] pt-[15px]">
        {features.map((f, i) => (
          <li key={i} className="relative flex w-6 flex-col items-center">
            <button aria-label={f}>
              <svg viewBox="0 0 16 16" className="h-4 w-4">
                {featureArt[f]}
              </svg>
            </button>
            <span className="mt-auto h-[5px] w-[2px] bg-[#c8c8c8]" />
            {f === "pattern" && (
              <button aria-label="Expand group" className="absolute -bottom-[6px] left-[5px] z-10">
                <svg viewBox="0 0 10 10" className="h-[10px] w-[10px]">
                  <rect x=".5" y=".5" width="9" height="9" rx="1.5" fill="#cfd6e2" stroke="#8a93a0" />
                  <path d="M5 2.500v5M2.500 5h5" stroke="#111" strokeWidth="1.5" />
                </svg>
              </button>
            )}
          </li>
        ))}
        <li className="absolute -bottom-[2px] -right-[5px]" aria-label="Timeline marker">
          <svg viewBox="0 0 11 32" className="h-8 w-[11px]">
            <path d="M0 0h11v5L6.500 9.500V32h-2V9.500L0 5z" fill="#666" />
          </svg>
        </li>
      </ol>
      <div className="ml-auto flex flex-col items-end pr-[10px]">
        <span className="h-[6px] w-[17px] rounded-b-md bg-[#c8c8c8]" />
        <button aria-label="Timeline settings" className="mr-[3px] mt-[14px]">
          <svg viewBox="0 0 16 16" className="h-4 w-4">
            <GearShape fill="#8d8d8d" hole="#f1f1f1" />
          </svg>
        </button>
      </div>
    </div>
  );
}

/* ---------- taskbar ---------- */

function Taskbar() {
  return (
    <footer className="flex h-10 shrink-0 bg-linear-to-r from-[#2f3033] via-[#272728] to-[#35373b] font-['Open_Sans',sans-serif] text-white">
      <button aria-label="Start" className="flex w-12 items-center justify-center">
        <svg viewBox="0 0 16 16" className="h-4 w-4">
          <path d="M0 2.300 6.800 1.300v6.300H0zM7.800 1.200 16 0v7.600H7.800zM0 8.500h6.800v6.300L0 13.800zM7.800 8.500H16V16l-8.200-1.200z" fill="#fff" />
        </svg>
      </button>
      <div className="flex w-[344px] items-center border border-[#5b5b5b] bg-[#333] pl-[11px]">
        <svg viewBox="0 0 17 17" className="h-[17px] w-[17px]" aria-hidden="true">
          <circle cx="10.5" cy="6.5" r="5.5" fill="none" stroke="#eee" strokeWidth="1.3" />
          <path d="M6.5 10.500.8 16.200" stroke="#eee" strokeWidth="1.4" />
        </svg>
        <input
          aria-label="Search"
          placeholder="Type here to search"
          className="ml-3 w-[280px] bg-transparent pt-px text-[14px] text-white outline-none placeholder:text-[#dcdcdc]"
        />
      </div>
      <button aria-label="OneNote" className="ml-[3px] flex w-12 items-center justify-center">
        <svg viewBox="0 0 24 24" className="h-6 w-6">
          <path d="M7 1h17v22H7z" fill="#c667e8" />
          <path d="M19 1h5v7h-5z" fill="#ad46da" />
          <path d="M19 8h5v7h-5z" fill="#9332bf" />
          <path d="M7 16h12v7H7zM19 15h5v8h-5z" fill="#8a2ab8" />
          <path d="M0 5h13v14H0z" fill="#6b1d9e" />
          <path d="M3.8 16V8.200L9 15.800V8" stroke="#fff" strokeWidth="1.6" fill="none" />
        </svg>
      </button>
      <button aria-label="File Explorer" className="flex w-12 items-center justify-center">
        <svg viewBox="0 0 24 20" className="h-5 w-[23px]">
          <path d="M0 2C0 1 .5 .5 1.500 .5H9L11 3H0z" fill="#e5a50f" />
          <path d="M0 3h22.500c1 0 1.500.5 1.500 1.500V18c0 .8-.5 1.500-1.500 1.500h-21C.6 19.500 0 19 0 18z" fill="#fcd25a" />
          <path d="M4 19.500v-8C4 10 5 9.500 6 9.500h12c1.300 0 2 .8 2 2v8h-4v-4c0-1-.5-1.500-1.500-1.500h-5c-1 0-1.500.5-1.500 1.500v4z" fill="#3f94c9" />
        </svg>
      </button>
      <button aria-label="Chrome" className="ml-[6px] mr-[5px] flex w-10 items-center justify-center border-b-2 border-[#ee8873] pt-[2px]">
        <svg viewBox="0 0 24 24" className="h-[23px] w-[23px]">
          <circle cx="12" cy="12" r="12" fill="#f7ca3c" />
          <path d="M12 0A12 12 0 0 0 1.600 6L7 15.200 12 6.500h10.700A12 12 0 0 0 12 0z" fill="#df4a3c" />
          <path d="M1.600 6A12 12 0 0 0 11 24l5.500-9.200A5.500 5.500 0 0 1 7 15z" fill="#3ba757" />
          <circle cx="12" cy="12" r="5.7" fill="#fff" />
          <circle cx="12" cy="12" r="4.5" fill="#4587f0" />
        </svg>
      </button>
      <button aria-label="Fusion 360" className="flex w-12 items-center justify-center border-b-2 border-[#ee8873] bg-[#525254] pt-[2px]">
        <svg viewBox="0 0 24 24" className="h-6 w-6">
          <path d="M0 0h24v24H0z" fill="#fbe9d6" />
          <path d="M10 24 24 8v16z" fill="#f6cda4" />
          <path d="M7 3h11v4.500h-6V10h4.500v4H12v6H7z" fill="#c8741c" />
          <path d="M7 3l2 2v13l-2 2zM18 3l-2 2H9" fill="#9c5210" />
          <path d="M13 21h8" stroke="#e0913d" strokeWidth="1.8" strokeDasharray="2 .7" />
        </svg>
      </button>
      <div className="ml-auto flex items-center">
        <button aria-label="Show hidden icons">
          <svg viewBox="0 0 14 8" className="h-2 w-[14px]">
            <path d="M1 7l6-6 6 6" fill="none" stroke="#fff" strokeWidth="1.4" />
          </svg>
        </button>
        <button aria-label="Volume" className="ml-[9px]">
          <svg viewBox="0 0 18 16" className="h-4 w-[18px]">
            <path d="M1 5.500h2.500L7.500 2v12l-4-3.500H1zM10 5.500c1.200 1.500 1.200 3.500 0 5M12.500 3.500c2.300 2.500 2.300 6.500 0 9M15 1.500c3.300 3.500 3.300 9.500 0 13" fill="none" stroke="#fff" strokeWidth="1.2" />
          </svg>
        </button>
        <button className="ml-2 text-center text-[11px] leading-[18px]">
          00:49
          <br />
          21/05/2020
        </button>
        <button aria-label="Notifications" className="ml-[18px] mr-[19px]">
          <svg viewBox="0 0 17 17" className="h-[17px] w-[17px]">
            <path d="M.8 1.500h15.400v11H11l-2.500 3-2.500-3H.8z" fill="none" stroke="#fff" strokeWidth="1.3" />
          </svg>
        </button>
        <span className="h-10 w-[5px] border-l border-[#777]" />
      </div>
    </footer>
  );
}

export default function App() {
  return (
    <div className="flex h-screen flex-col overflow-hidden bg-white pb-[26px] pl-1 pr-5 font-['Liberation_Sans',Arial,sans-serif]">
      <TopBar />
      <Ribbon />
      <main className="relative flex min-h-0 flex-1 justify-between overflow-hidden p-1">
        <ModelCanvas />
        <aside className="relative flex w-[300px] flex-col">
          <Browser />
          <div className="mt-auto">
            <PanelHeader title="COMMENTS" plus />
          </div>
        </aside>
        <aside className="relative w-[250px] pt-[120px]">
          <Palette />
        </aside>
        <ViewToolbar />
      </main>
      <Timeline />
      <Taskbar />
    </div>
  );
}
